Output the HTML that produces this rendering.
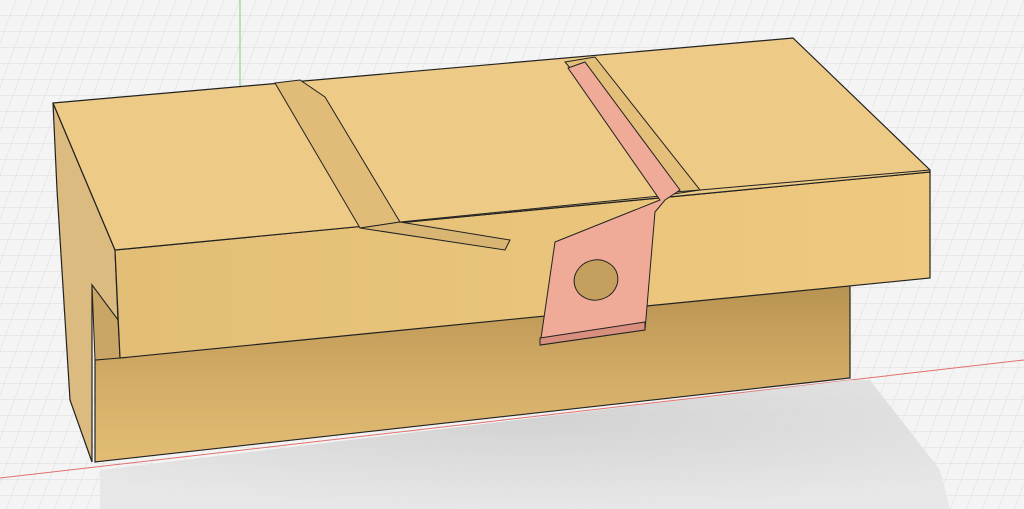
<!DOCTYPE html>
<html><head><meta charset="utf-8"><style>
html,body{margin:0;padding:0;background:#f3f3f3;overflow:hidden}
svg{display:block}
</style></head><body>
<svg width="1024" height="509" viewBox="0 0 1024 509" xmlns="http://www.w3.org/2000/svg">
<defs>
<pattern id="g" width="16" height="16" patternUnits="userSpaceOnUse" patternTransform="skewX(-20)">
<path d="M16 0V16M0 16H16" stroke="#dcdcdc" stroke-width="1" fill="none"/>
</pattern>
<linearGradient id="fr" x1="0" y1="0" x2="1" y2="0">
<stop offset="0" stop-color="#e3be76"/><stop offset="1" stop-color="#efc97f"/></linearGradient>
<linearGradient id="lo" x1="0" y1="0" x2="0" y2="1">
<stop offset="0" stop-color="#b89250"/><stop offset="0.5" stop-color="#d2ac66"/><stop offset="1" stop-color="#e2bd75"/></linearGradient>
<radialGradient id="sh" cx="0.5" cy="0.3" r="0.7">
<stop offset="0" stop-color="#cfcfcf"/><stop offset="1" stop-color="#e6e6e6"/></radialGradient>
</defs>
<rect width="1024" height="509" fill="#f4f4f4"/>
<rect width="1024" height="509" fill="url(#g)"/>
<line x1="240" y1="0" x2="240" y2="105" stroke="#7fcf7f" stroke-width="1"/>
<line x1="0" y1="478" x2="1024" y2="360" stroke="#e07070" stroke-width="1"/>
<polygon points="100,470 850,380 870,380 940,470 950,509 100,509" fill="url(#sh)" opacity="0.9"/>
<polygon points="95,360 850,285 850,378 95,462" fill="url(#lo)" stroke="#222" stroke-width="1.2"/>
<polygon points="53,103 115,250 118,320 92,285 92,462 70,400 57,190" fill="#dcbb80" stroke="#222" stroke-width="1.2"/>
<polygon points="92,285 118,320 120,358 95,360" fill="#c9a665" stroke="#222" stroke-width="1"/>
<polygon points="115,250 930,172 930,278 120,358" fill="url(#fr)" stroke="#222" stroke-width="1.2"/>
<polygon points="53,103 793,38 930,170 930,172 115,250" fill="#edca85" stroke="#222" stroke-width="1.2"/>
<polyline points="400,222 660,196 700,190 930,170" fill="none" stroke="#222" stroke-width="1"/>
<polygon points="275,83 300,80 325,97 400,222 360,228" fill="#e0bc78" stroke="#222" stroke-width="1"/>
<polygon points="360,228 400,222 510,240 505,250" fill="#d9b573" stroke="#222" stroke-width="1"/>
<polygon points="565,62 595,57 700,190 675,192" fill="#e3bf7a" stroke="#222" stroke-width="1"/>
<polygon points="568,68 585,62 680,190 665,200 655,212 645,330 540,345 555,242 660,200" fill="#f0aa98" stroke="#222" stroke-width="1"/>
<polygon points="540,338 645,322 645,330 540,345" fill="#d98f7e" stroke="#222" stroke-width="1"/>
<ellipse cx="596" cy="280" rx="22" ry="20" transform="rotate(-15 596 280)" fill="#c59f5e" stroke="#222" stroke-width="1"/>
</svg>
</body></html>
